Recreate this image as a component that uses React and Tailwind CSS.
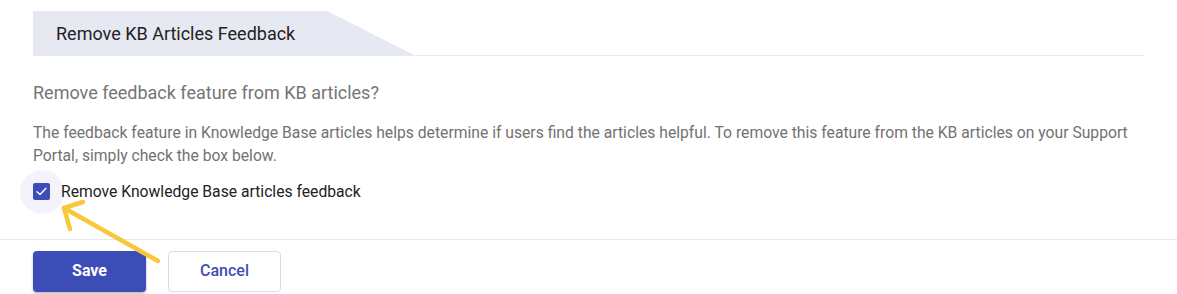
export default function App() {
  return (
    <div className="relative w-[1177px] h-[294px] bg-white overflow-hidden font-['Roboto',sans-serif]">
      <div className="px-[33px] pt-[11px]">
        <div className="flex items-end">
          <div className="flex h-[45px]">
            <div className="w-[294px] bg-[#e6e8f2] pl-[23px] flex items-center text-[18px] text-[#222]">
              Remove KB Articles Feedback
            </div>
            <svg width="89" height="45" viewBox="0 0 89 45" className="block">
              <polygon points="0,0 0,45 89,45" fill="#e6e8f2" />
            </svg>
          </div>
          <div className="flex-1 border-b border-[#e8e7f4]" />
        </div>

        <h3 className="mt-[26px] text-[18px] leading-[22px] text-[#757575]">
          Remove feedback feature from KB articles?
        </h3>

        <p className="mt-[17px] w-[1111px] text-[15.7px] leading-[23px] text-[#727272]">
          The feedback feature in Knowledge Base articles helps determine if users find the articles helpful. To remove this feature from the KB articles on your Support Portal, simply check the box below.
        </p>

        <label className="mt-[13px] flex items-center gap-[11px]">
          <span className="relative flex items-center justify-center w-[17px] h-[17px]">
            <span className="absolute left-1/2 top-1/2 w-[44px] h-[44px] -translate-x-1/2 -translate-y-1/2 rounded-full bg-[#f4f3fb]" />
            <span className="relative flex items-center justify-center w-[17px] h-[17px] rounded-[2px] bg-[#3d4db7]">
              <svg width="11" height="9" viewBox="0 0 11 9" fill="none">
                <path d="M1 4.8 L4 7.6 L10 1.2" stroke="#fff" strokeWidth="1.4" strokeLinecap="round" strokeLinejoin="round" />
              </svg>
            </span>
          </span>
          <span className="relative text-[15.7px] text-[#222]">Remove Knowledge Base articles feedback</span>
        </label>
      </div>

      <div className="mt-[35px] border-t border-[#e8e7f0]" />

      <div className="px-[33px] pt-[11px] flex gap-[22px]">
        <button className="w-[113px] h-[41px] rounded-[4px] bg-[#3d4db7] text-white font-bold text-[16px] shadow-[0_2px_3px_rgba(0,0,0,0.25)]">
          Save
        </button>
        <button className="w-[113px] h-[41px] rounded-[4px] bg-white border border-[#dcdce4] text-[#3d4db7] font-medium text-[16px]">
          Cancel
        </button>
      </div>

      <svg className="absolute left-0 top-0 pointer-events-none" width="1177" height="294" viewBox="0 0 1177 294">
        <g stroke="#f7c83a" strokeWidth="4.5" strokeLinecap="round" strokeLinejoin="round" fill="none">
          <path d="M158 261 L64 208" />
          <path d="M83 202 L64 208 L70 229" />
        </g>
      </svg>
    </div>
  );
}
